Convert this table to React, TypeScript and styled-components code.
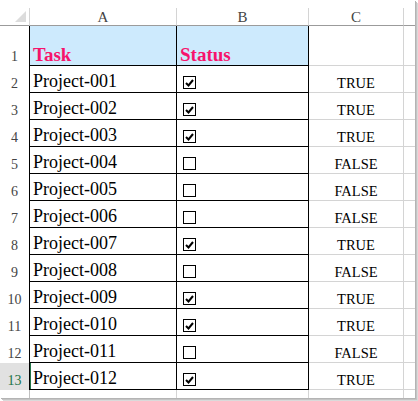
import React from "react";
import styled, { createGlobalStyle } from "styled-components";

const Global = createGlobalStyle`
  html, body { margin: 0; padding: 0; background: #ffffff; }
  body { font-family: "Liberation Serif", "Times New Roman", serif; }
`;

const rows: { task: string; done: boolean }[] = [
  { task: "Project-001", done: true },
  { task: "Project-002", done: true },
  { task: "Project-003", done: true },
  { task: "Project-004", done: false },
  { task: "Project-005", done: false },
  { task: "Project-006", done: false },
  { task: "Project-007", done: true },
  { task: "Project-008", done: false },
  { task: "Project-009", done: true },
  { task: "Project-010", done: true },
  { task: "Project-011", done: false },
  { task: "Project-012", done: true },
];

const Page = styled.div`
  width: 418px;
  height: 401px;
  overflow: hidden;
  background: #ffffff;
`;

const Frame = styled.div`
  width: 415px;
  height: 398px;
  overflow: hidden;
  background: #ffffff;
  box-shadow: 1px 1px 0 #b4b4b4, 2px 2px 0 #c4c4c4, 3px 3px 0 #dadada;
  padding-top: 8px;
  box-sizing: border-box;
`;

const Sheet = styled.div`
  display: grid;
  grid-template-columns: 30px 147px 132px 95px 11px;
  grid-template-rows: 18px 40px repeat(12, 27px) 20px;
  line-height: 1;
`;

const Corner = styled.div`
  position: relative;
  border-right: 1px solid #d4d4d4;
  border-bottom: 1px solid #9b9b9b;
  box-sizing: border-box;
`;

const Triangle = styled.div`
  position: absolute;
  right: 3px;
  bottom: 3px;
  width: 0;
  height: 0;
  border-left: 11px solid transparent;
  border-bottom: 11px solid #dcdcdc;
`;

const ColHead = styled.div<{ $last?: boolean }>`
  display: flex;
  align-items: center;
  justify-content: center;
  font-size: 15px;
  color: #444444;
  border-right: ${(p) => (p.$last ? "none" : "1px solid #d4d4d4")};
  border-bottom: 1px solid #9b9b9b;
  box-sizing: border-box;
  padding-top: 2px;
`;

const RowHead = styled.div<{ $sel?: boolean }>`
  display: flex;
  align-items: flex-end;
  justify-content: center;
  padding-bottom: 2px;
  font-size: 14px;
  color: ${(p) => (p.$sel ? "#217346" : "#444444")};
  background: ${(p) => (p.$sel ? "#e1e1e1" : "#ffffff")};
  border-right: 1px solid #000000;
  box-sizing: border-box;
`;

const HeadCell = styled.div`
  display: flex;
  align-items: flex-end;
  padding: 0 0 1px 3px;
  background: #cdeafd;
  color: #f7136b;
  font-weight: bold;
  font-size: 19px;
  border-right: 1px solid #000000;
  border-bottom: 1px solid #000000;
  box-sizing: border-box;
`;

const TaskCell = styled.div<{ $sel?: boolean }>`
  display: flex;
  align-items: flex-end;
  padding: 0 0 2px 3px;
  font-size: 18px;
  color: #000000;
  border-right: 1px solid #000000;
  border-bottom: 1px solid #000000;
  box-shadow: ${(p) => (p.$sel ? "inset 1px 0 0 #217346" : "none")};
  box-sizing: border-box;
`;

const CheckCell = styled.div`
  display: flex;
  align-items: flex-start;
  padding: 10px 0 0 6px;
  border-right: 1px solid #000000;
  border-bottom: 1px solid #000000;
  box-sizing: border-box;
`;

const Box = styled.div`
  width: 13px;
  height: 13px;
  border: 1.5px solid #000000;
  box-sizing: border-box;
  display: flex;
  align-items: center;
  justify-content: center;
`;

const PlainCell = styled.div<{ $last?: boolean }>`
  display: flex;
  align-items: flex-end;
  justify-content: center;
  padding-bottom: 2px;
  font-size: 14.5px;
  color: #000000;
  border-right: ${(p) => (p.$last ? "none" : "1px solid #d4d4d4")};
  border-bottom: 1px solid #d4d4d4;
  box-sizing: border-box;
`;

const EmptyRowHead = styled.div`
  border-right: 1px solid #c0c0c0;
`;

const EmptyCell = styled.div<{ $last?: boolean }>`
  border-right: ${(p) => (p.$last ? "none" : "1px solid #d4d4d4")};
`;

const Check = () => (
  <svg width="9" height="8" viewBox="0 0 9 8">
    <path d="M1 4 L3.5 6.5 L8 1" fill="none" stroke="#000" strokeWidth="2" />
  </svg>
);

export default function App() {
  return (
    <Page>
      <Global />
      <Frame>
        <Sheet>
          <Corner>
            <Triangle />
          </Corner>
          <ColHead>A</ColHead>
          <ColHead>B</ColHead>
          <ColHead>C</ColHead>
          <ColHead $last />

          <RowHead>1</RowHead>
          <HeadCell>Task</HeadCell>
          <HeadCell>Status</HeadCell>
          <PlainCell />
          <PlainCell $last />

          {rows.map((r, i) => {
            const sel = i === rows.length - 1;
            return (
              <React.Fragment key={r.task}>
                <RowHead $sel={sel}>{i + 2}</RowHead>
                <TaskCell $sel={sel}>{r.task}</TaskCell>
                <CheckCell>
                  <Box>{r.done ? <Check /> : null}</Box>
                </CheckCell>
                <PlainCell>{r.done ? "TRUE" : "FALSE"}</PlainCell>
                <PlainCell $last />
              </React.Fragment>
            );
          })}

          <EmptyRowHead />
          <EmptyCell />
          <EmptyCell />
          <EmptyCell />
          <EmptyCell $last />
        </Sheet>
      </Frame>
    </Page>
  );
}
